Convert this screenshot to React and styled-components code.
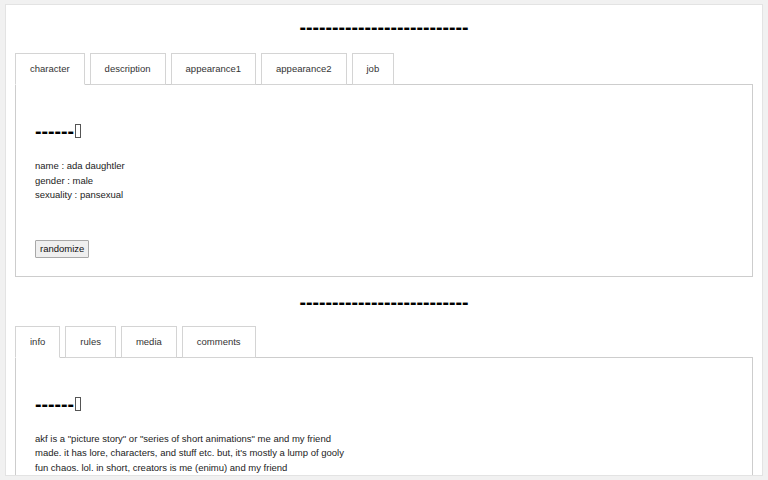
import React from 'react';
import styled, { createGlobalStyle } from 'styled-components';

const GlobalStyle = createGlobalStyle`
    html, body {
        margin: 0;
        padding: 0;
        background: #f1f1f1;
        font-family: "Liberation Sans", Arial, sans-serif;
    }
`;

const Page = styled.div`
    padding: 4px 5px;
`;

const Container = styled.div`
    box-sizing: border-box;
    height: 472px;
    overflow: hidden;
    background: #fff;
    border: 1px solid #e3e3e3;
    padding: 0 9px;
`;

const Title = styled.h2`
    margin: ${p => p.$margin || '11px 0 15px'};
    font-size: 19.5px;
    line-height: 22px;
    font-weight: bold;
    text-align: center;
    color: #000;
`;

const TabStrip = styled.ul`
    display: flex;
    gap: 5px;
    list-style: none;
    margin: 0;
    padding: 0;
    position: relative;
    z-index: 1;
`;

const Tab = styled.li`
    box-sizing: border-box;
    height: 32px;
    line-height: 30px;
    padding: 0 14px;
    margin-bottom: -1px;
    font-size: 9.5px;
    color: #333;
    background: #fff;
    border: 1px solid #d4d4d4;
    border-bottom-color: ${p => (p.$active ? '#fff' : '#d4d4d4')};
`;

const Panel = styled.div`
    border: 1px solid #cdcdcd;
    padding: 35px 19px 18px;
    color: #222;
    font-size: 9.5px;
    line-height: 14.5px;
`;

const Heading = styled.h3`
    margin: 0 0 17px;
    font-size: 19.5px;
    line-height: 22px;
    font-weight: bold;
    color: #000;
    display: flex;
    align-items: center;
`;

const Tofu = styled.span`
    display: inline-block;
    box-sizing: border-box;
    width: 6px;
    height: 14px;
    margin-left: 1px;
    border: 1px solid #555;
`;

const Details = styled.div`
    margin-bottom: 37px;
`;

const Button = styled.button`
    font-family: inherit;
    font-size: 9.5px;
    color: #111;
    height: 18px;
    padding: 0 4px;
    background: #efefef;
    border: 1px solid #a8a8a8;
    border-radius: 1px;
`;

const Blurb = styled.p`
    margin: 0;
    width: 312px;
`;

const Section = ({ tabs, active, children, titleMargin }) => (
    <>
        <Title $margin={titleMargin}>--------------------------</Title>
        <TabStrip>
            {tabs.map(t => (
                <Tab key={t} $active={t === active}>{t}</Tab>
            ))}
        </TabStrip>
        <Panel>{children}</Panel>
    </>
);

export default function App() {
    return (
        <Page>
            <GlobalStyle />
            <Container>
                <Section
                    tabs={['character', 'description', 'appearance1', 'appearance2', 'job']}
                    active="character"
                >
                    <Heading>------<Tofu /></Heading>
                    <Details>
                        <div>name : ada daughtler</div>
                        <div>gender : male</div>
                        <div>sexuality : pansexual</div>
                    </Details>
                    <Button>randomize</Button>
                </Section>
                <Section
                    tabs={['info', 'rules', 'media', 'comments']}
                    active="info"
                    titleMargin="14px 0 13px"
                >
                    <Heading>------<Tofu /></Heading>
                    <Blurb>
                        akf is a "picture story" or "series of short animations" me and my friend
                        made. it has lore, characters, and stuff etc. but, it's mostly a lump of gooly
                        fun chaos. lol. in short, creators is me (enimu) and my friend
                    </Blurb>
                </Section>
            </Container>
        </Page>
    );
}
